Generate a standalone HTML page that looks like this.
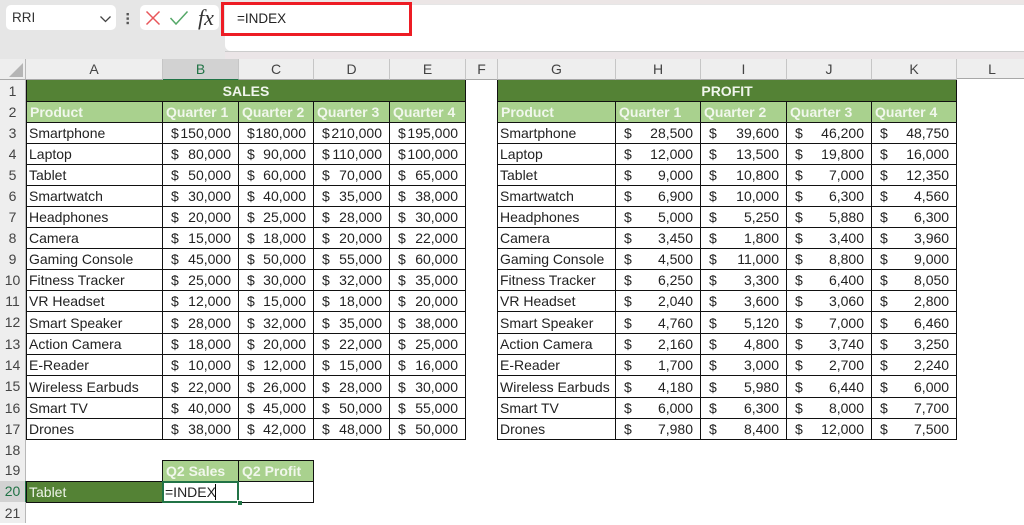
<!DOCTYPE html>
<html><head><meta charset="utf-8"><title>Excel INDEX</title>
<style>
html,body{margin:0;padding:0;background:#fff}
body{width:1024px;height:523px;position:relative;overflow:hidden;font-family:"Liberation Sans",sans-serif;font-size:14px;color:#222}
.a{position:absolute}
#rib{left:0;top:0;width:1024px;height:59px;background:#e6e6e6}
#nb{left:6px;top:5px;width:110px;height:25px;background:#fff;border-radius:5px;line-height:25px;text-indent:6px;color:#333;font-size:13.5px}
#fb{left:140px;top:5px;width:79px;height:25px;background:#fff;border-radius:5px}
#fi{left:225px;top:5px;width:799px;height:46px;background:#fff;border-radius:0 0 0 6px}
#red{left:221px;top:2px;width:191px;height:34px;box-sizing:border-box;border:3px solid #ed1c24}
#ft{left:237px;top:10px;line-height:17px;font-size:13.5px;color:#222}
.ch{position:absolute;top:59px;height:20px;line-height:21px;text-align:center;background:#eee;border-right:1px solid #c6c6c6;border-bottom:1px solid #a8a8a8;color:#444;font-size:14px;box-sizing:content-box}
.rh{position:absolute;left:0;width:25px;text-align:center;background:#eee;border-right:1px solid #b8b8b8;color:#444;font-size:14px;line-height:23px}
table{position:absolute;border-collapse:separate;border-spacing:0;table-layout:fixed}
tr{height:21px}
tr.t{height:22px}
td{box-sizing:border-box;padding:0 7px 0 8px;border-right:1px solid #111;border-bottom:1px solid #111;line-height:20px;white-space:nowrap;overflow:hidden;text-align:right;color:#222}
td:first-child{text-align:left;padding:0 0 0 2px;border-left:1px solid #111}
td i{float:left;font-style:normal}
tr.h td{background:#a9d18e;color:#f1f7ec;font-weight:bold;text-align:left;padding:0 0 0 3px}
tr.s td{background:#548235;color:#f0f5ec;font-weight:bold;text-align:center;padding:0}
</style></head><body>
<div class="a" id="rib"></div>
<div class="a" style="left:225px;top:0;width:799px;height:4px;background:#ece6e6"></div>
<div class="a" style="left:225px;top:51px;width:799px;height:8px;background:#ebe5e7;border-top:1px solid #ccc;box-sizing:border-box"></div>
<div class="a" id="nb">RRI</div>
<svg class="a" style="left:99px;top:15px" width="13" height="8" viewBox="0 0 13 8"><path d="M1.5 1.5L6.5 6.5L11.5 1.5" fill="none" stroke="#444" stroke-width="1.3"/></svg>
<svg class="a" style="left:125px;top:12px" width="6" height="13" viewBox="0 0 6 13"><rect x="1.5" y="1" width="2.4" height="2.4" fill="#555"/><rect x="1.5" y="5.4" width="2.4" height="2.4" fill="#555"/><rect x="1.5" y="9.8" width="2.4" height="2.4" fill="#555"/></svg>
<div class="a" id="fb"></div>
<svg class="a" style="left:145px;top:10px" width="16" height="16" viewBox="0 0 16 16"><path d="M1.5 1.5L14.5 14.5M14.5 1.5L1.5 14.5" stroke="#e8565a" stroke-width="1.5" fill="none"/></svg>
<svg class="a" style="left:169px;top:10px" width="20" height="16" viewBox="0 0 20 16"><path d="M1.5 8L7 14L18.5 1.5" stroke="#55a868" stroke-width="1.5" fill="none"/></svg>
<div class="a" style="left:198px;top:5px;font-family:'Liberation Serif',serif;font-style:italic;font-size:22px;line-height:25px;color:#333">fx</div>
<div class="a" id="fi"></div>
<div class="a" id="ft">=INDEX</div>
<div class="a" id="red"></div>

<div class="ch" style="left:0;width:25px;border-right-color:#b8b8b8"></div>
<svg class="a" style="left:8px;top:62px" width="16" height="16" viewBox="0 0 16 16"><path d="M15 1V15H1Z" fill="#b5b5b5"/></svg>
<div class="ch" style="left:26px;width:136px">A</div>
<div class="ch" style="left:163px;width:75px;background:#d2d2d2;color:#217346;border-bottom:1px solid #217346">B</div>
<div class="ch" style="left:239px;width:74px">C</div>
<div class="ch" style="left:314px;width:75px">D</div>
<div class="ch" style="left:390px;width:75px">E</div>
<div class="ch" style="left:466px;width:31px">F</div>
<div class="ch" style="left:498px;width:117px">G</div>
<div class="ch" style="left:616px;width:84px">H</div>
<div class="ch" style="left:701px;width:85px">I</div>
<div class="ch" style="left:787px;width:84px">J</div>
<div class="ch" style="left:872px;width:84px">K</div>
<div class="ch" style="left:957px;width:67px;border-right:0;box-sizing:border-box;text-indent:3px">L</div>

<div class="rh" style="top:80px;height:21px">1</div>
<div class="rh" style="top:101px;height:21px">2</div>
<div class="rh" style="top:122px;height:21px">3</div>
<div class="rh" style="top:143px;height:21px">4</div>
<div class="rh" style="top:164px;height:21px">5</div>
<div class="rh" style="top:185px;height:21px">6</div>
<div class="rh" style="top:206px;height:21px">7</div>
<div class="rh" style="top:227px;height:21px">8</div>
<div class="rh" style="top:248px;height:21px">9</div>
<div class="rh" style="top:269px;height:21px">10</div>
<div class="rh" style="top:290px;height:21px">11</div>
<div class="rh" style="top:311px;height:22px">12</div>
<div class="rh" style="top:333px;height:21px">13</div>
<div class="rh" style="top:354px;height:21px">14</div>
<div class="rh" style="top:375px;height:22px">15</div>
<div class="rh" style="top:397px;height:21px">16</div>
<div class="rh" style="top:418px;height:21px">17</div>
<div class="rh" style="top:439px;height:20px">18</div>
<div class="rh" style="top:459px;height:22px">19</div>
<div class="rh" style="top:481px;height:21px;background:#d2d2d2;color:#217346;border-right:1px solid #217346;line-height:21px">20</div>
<div class="rh" style="top:502px;height:21px">21</div>

<table style="left:26px;top:80px;width:440px">
<colgroup><col style="width:137px"><col style="width:76px"><col style="width:75px"><col style="width:76px"><col style="width:76px"></colgroup>
<tr class="s t"><td colspan="5">SALES</td></tr>
<tr class="h"><td>Product</td><td>Quarter 1</td><td>Quarter 2</td><td>Quarter 3</td><td>Quarter 4</td></tr>
<tr><td>Smartphone</td><td><i>$</i>150,000</td><td><i>$</i>180,000</td><td><i>$</i>210,000</td><td><i>$</i>195,000</td></tr>
<tr><td>Laptop</td><td><i>$</i>80,000</td><td><i>$</i>90,000</td><td><i>$</i>110,000</td><td><i>$</i>100,000</td></tr>
<tr><td>Tablet</td><td><i>$</i>50,000</td><td><i>$</i>60,000</td><td><i>$</i>70,000</td><td><i>$</i>65,000</td></tr>
<tr><td>Smartwatch</td><td><i>$</i>30,000</td><td><i>$</i>40,000</td><td><i>$</i>35,000</td><td><i>$</i>38,000</td></tr>
<tr><td>Headphones</td><td><i>$</i>20,000</td><td><i>$</i>25,000</td><td><i>$</i>28,000</td><td><i>$</i>30,000</td></tr>
<tr><td>Camera</td><td><i>$</i>15,000</td><td><i>$</i>18,000</td><td><i>$</i>20,000</td><td><i>$</i>22,000</td></tr>
<tr><td>Gaming Console</td><td><i>$</i>45,000</td><td><i>$</i>50,000</td><td><i>$</i>55,000</td><td><i>$</i>60,000</td></tr>
<tr><td>Fitness Tracker</td><td><i>$</i>25,000</td><td><i>$</i>30,000</td><td><i>$</i>32,000</td><td><i>$</i>35,000</td></tr>
<tr><td>VR Headset</td><td><i>$</i>12,000</td><td><i>$</i>15,000</td><td><i>$</i>18,000</td><td><i>$</i>20,000</td></tr>
<tr class="t"><td>Smart Speaker</td><td><i>$</i>28,000</td><td><i>$</i>32,000</td><td><i>$</i>35,000</td><td><i>$</i>38,000</td></tr>
<tr><td>Action Camera</td><td><i>$</i>18,000</td><td><i>$</i>20,000</td><td><i>$</i>22,000</td><td><i>$</i>25,000</td></tr>
<tr><td>E-Reader</td><td><i>$</i>10,000</td><td><i>$</i>12,000</td><td><i>$</i>15,000</td><td><i>$</i>16,000</td></tr>
<tr class="t"><td>Wireless Earbuds</td><td><i>$</i>22,000</td><td><i>$</i>26,000</td><td><i>$</i>28,000</td><td><i>$</i>30,000</td></tr>
<tr><td>Smart TV</td><td><i>$</i>40,000</td><td><i>$</i>45,000</td><td><i>$</i>50,000</td><td><i>$</i>55,000</td></tr>
<tr><td>Drones</td><td><i>$</i>38,000</td><td><i>$</i>42,000</td><td><i>$</i>48,000</td><td><i>$</i>50,000</td></tr>
</table>

<table style="left:497px;top:80px;width:460px">
<colgroup><col style="width:119px"><col style="width:85px"><col style="width:86px"><col style="width:85px"><col style="width:85px"></colgroup>
<tr class="s t"><td colspan="5">PROFIT</td></tr>
<tr class="h"><td>Product</td><td>Quarter 1</td><td>Quarter 2</td><td>Quarter 3</td><td>Quarter 4</td></tr>
<tr><td>Smartphone</td><td><i>$</i>28,500</td><td><i>$</i>39,600</td><td><i>$</i>46,200</td><td><i>$</i>48,750</td></tr>
<tr><td>Laptop</td><td><i>$</i>12,000</td><td><i>$</i>13,500</td><td><i>$</i>19,800</td><td><i>$</i>16,000</td></tr>
<tr><td>Tablet</td><td><i>$</i>9,000</td><td><i>$</i>10,800</td><td><i>$</i>7,000</td><td><i>$</i>12,350</td></tr>
<tr><td>Smartwatch</td><td><i>$</i>6,900</td><td><i>$</i>10,000</td><td><i>$</i>6,300</td><td><i>$</i>4,560</td></tr>
<tr><td>Headphones</td><td><i>$</i>5,000</td><td><i>$</i>5,250</td><td><i>$</i>5,880</td><td><i>$</i>6,300</td></tr>
<tr><td>Camera</td><td><i>$</i>3,450</td><td><i>$</i>1,800</td><td><i>$</i>3,400</td><td><i>$</i>3,960</td></tr>
<tr><td>Gaming Console</td><td><i>$</i>4,500</td><td><i>$</i>11,000</td><td><i>$</i>8,800</td><td><i>$</i>9,000</td></tr>
<tr><td>Fitness Tracker</td><td><i>$</i>6,250</td><td><i>$</i>3,300</td><td><i>$</i>6,400</td><td><i>$</i>8,050</td></tr>
<tr><td>VR Headset</td><td><i>$</i>2,040</td><td><i>$</i>3,600</td><td><i>$</i>3,060</td><td><i>$</i>2,800</td></tr>
<tr class="t"><td>Smart Speaker</td><td><i>$</i>4,760</td><td><i>$</i>5,120</td><td><i>$</i>7,000</td><td><i>$</i>6,460</td></tr>
<tr><td>Action Camera</td><td><i>$</i>2,160</td><td><i>$</i>4,800</td><td><i>$</i>3,740</td><td><i>$</i>3,250</td></tr>
<tr><td>E-Reader</td><td><i>$</i>1,700</td><td><i>$</i>3,000</td><td><i>$</i>2,700</td><td><i>$</i>2,240</td></tr>
<tr class="t"><td>Wireless Earbuds</td><td><i>$</i>4,180</td><td><i>$</i>5,980</td><td><i>$</i>6,440</td><td><i>$</i>6,000</td></tr>
<tr><td>Smart TV</td><td><i>$</i>6,000</td><td><i>$</i>6,300</td><td><i>$</i>8,000</td><td><i>$</i>7,700</td></tr>
<tr><td>Drones</td><td><i>$</i>7,980</td><td><i>$</i>8,400</td><td><i>$</i>12,000</td><td><i>$</i>7,500</td></tr>
</table>

<table style="left:162px;top:460px;width:152px;border-top:1px solid #111">
<colgroup><col style="width:77px"><col style="width:75px"></colgroup>
<tr class="h"><td>Q2 Sales</td><td>Q2 Profit</td></tr>
<tr><td>=INDEX</td><td></td></tr>
</table>
<div class="a" style="left:26px;top:481px;width:136px;height:22px;box-sizing:border-box;background:#548235;border:1px solid #111;border-right:0;color:#eef4e9;line-height:20px;padding-left:2px">Tablet</div>
<div class="a" style="left:162px;top:481px;width:77px;height:22px;box-sizing:border-box;border:2px solid #217346"></div>
<div class="a" style="left:237px;top:500px;width:4px;height:4px;background:#217346;border-left:1px solid #fff;border-top:1px solid #fff"></div>
<div class="a" style="left:215px;top:484px;width:1px;height:16px;background:#000"></div>
</body></html>
